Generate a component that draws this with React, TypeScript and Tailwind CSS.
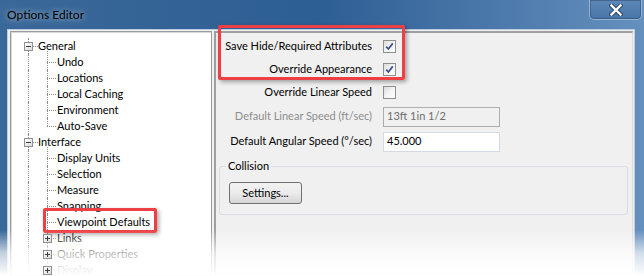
import React from 'react'

type Node = {
   label: string
   level: number
   expander?: '-' | '+'
   first?: boolean
   last?: boolean
}

const nodes: Node[] = [
   { label: 'General', level: 0, expander: '-' },
   { label: 'Undo', level: 1, first: true },
   { label: 'Locations', level: 1 },
   { label: 'Local Caching', level: 1 },
   { label: 'Environment', level: 1 },
   { label: 'Auto-Save', level: 1, last: true },
   { label: 'Interface', level: 0, expander: '-' },
   { label: 'Display Units', level: 1, first: true },
   { label: 'Selection', level: 1 },
   { label: 'Measure', level: 1 },
   { label: 'Snapping', level: 1 },
   { label: 'Viewpoint Defaults', level: 1 },
   { label: 'Links', level: 1, expander: '+' },
   { label: 'Quick Properties', level: 1, expander: '+' },
   { label: 'Display', level: 1, expander: '+' },
]

const Expander = ({ sign }: { sign: '-' | '+' }) => (
   <div className="relative z-10 w-[9px] h-[9px] border border-[#919191] bg-linear-to-br from-white to-[#dcdcdc]">
      <div className="absolute left-[1px] top-[3px] w-[5px] h-px bg-[#3c3c3c]" />
      {sign === '+' && <div className="absolute left-[3px] top-[1px] w-px h-[5px] bg-[#3c3c3c]" />}
   </div>
)

const TreeRow = ({ node }: { node: Node }) => (
   <div className="flex h-4 items-stretch">
      {/* level 0 column */}
      <div className="relative w-4 flex items-center justify-center">
         <div className="absolute left-[8px] top-0 bottom-0 border-l border-dotted border-[#8c8c8c]" />
         {node.level === 0 && (
            <>
               <div className="absolute left-[13px] top-[8px] w-[5px] border-t border-dotted border-[#8c8c8c]" />
               <Expander sign={node.expander!} />
            </>
         )}
      </div>
      {node.level === 1 && (
         <div className="relative w-[17px] ml-[3px] flex items-center justify-center">
            <div className={`absolute left-[8px] border-l border-dotted border-[#8c8c8c] ${node.first ? 'top-[-3px]' : 'top-0'} ${node.last ? 'h-[8px]' : 'bottom-0'}`} />
            <div className="absolute left-[8px] top-[8px] w-[9px] border-t border-dotted border-[#8c8c8c]" />
            {node.expander && <Expander sign={node.expander} />}
         </div>
      )}
      <div className={`flex items-center text-[11px] text-black whitespace-nowrap ${node.level === 0 ? 'ml-[2px]' : 'ml-[1px]'}`}>
         {node.label}
      </div>
   </div>
)

const Checkbox = ({ checked }: { checked: boolean }) => (
   <div className="w-[13px] h-[13px] border border-[#8e8f8f] bg-linear-to-br from-[#dcdcdc] via-[#f4f4f4] to-white flex items-center justify-center">
      {checked && (
         <svg width="9" height="9" viewBox="0 0 9 9">
            <path d="M1.2 4.6 L3.4 7 L7.8 1.4" fill="none" stroke="#3c4f8c" strokeWidth="1.7" />
         </svg>
      )}
   </div>
)

const App = () => {
   return (
      <div className="relative w-[644px] h-[276px] overflow-hidden bg-linear-to-r from-[#3a6898] via-[#2d5e94] to-[#6590be]" style={{ fontFamily: 'Lato, "Noto Sans", sans-serif' }}>
         {/* title bar */}
         <div className="relative h-[29px] flex items-center pl-[7px] pt-[1px]">
            <span className="text-[12px] text-black [text-shadow:0_0_6px_rgba(255,255,255,0.7)]">Options Editor</span>
            <div className="absolute right-[2px] top-0 w-[53px] h-[20px] rounded-b-[5px] border border-t-0 border-[#a8c2de]/80 bg-linear-to-b from-[#5f88b6] to-[#4774a7] shadow-[inset_0_0_0_1px_rgba(40,70,110,0.5)] flex items-center justify-center">
               <svg width="14" height="12" viewBox="0 0 14 12">
                  <path d="M2.5 1.5 L11.5 10.5 M11.5 1.5 L2.5 10.5" stroke="#27405e" strokeWidth="4.2" strokeLinecap="square" />
                  <path d="M2.5 1.5 L11.5 10.5 M11.5 1.5 L2.5 10.5" stroke="#ffffff" strokeWidth="2.4" strokeLinecap="square" />
               </svg>
            </div>
         </div>

         {/* client area */}
         <div className="ml-[7px] mr-[9px] h-[247px] border-l border-t border-r border-[#b8cde3] bg-[#f0f0f0] flex gap-[2px] pt-[1px] pl-[2px] pr-[1px]">
            {/* tree */}
            <div className="w-[202px] h-full border border-[#9c9c9c] bg-white pt-[6px] pl-[9px] shadow-[inset_1px_1px_0_#d8d8d8]">
               {nodes.map((n) => (
                  <TreeRow key={n.label} node={n} />
               ))}
            </div>

            {/* settings panel */}
            <div className="flex-1 h-full border-t-2 border-l-2 border-t-[#a0a0a0] border-l-[#a0a0a0] border-r border-r-[#dcdcdc] bg-[#f0f0f0] pt-[2px] pl-[2px] text-[11px] text-black">
               <div className="grid grid-cols-[154px_auto] gap-x-[11px] items-center">
                  <div className="h-[23px] flex items-center justify-end whitespace-nowrap">Save Hide/Required Attributes</div>
                  <Checkbox checked />
                  <div className="h-[23px] flex items-center justify-end whitespace-nowrap">Override Appearance</div>
                  <Checkbox checked />
                  <div className="h-[23px] flex items-center justify-end whitespace-nowrap">Override Linear Speed</div>
                  <Checkbox checked={false} />
                  <div className="h-[25px] flex items-center justify-end whitespace-nowrap text-[#8d8d8d]">Default Linear Speed (ft/sec)</div>
                  <div className="w-[117px] h-[20px] border border-[#adadad] bg-[#f0f0f0] text-[#6d6d6d] pl-[3px] flex items-center">13ft 1in 1/2</div>
                  <div className="h-[25px] flex items-center justify-end whitespace-nowrap">Default Angular Speed (°/sec)</div>
                  <div className="w-[117px] h-[20px] border border-[#d3dae6] bg-white pl-[3px] flex items-center">45.000</div>
               </div>

               {/* collision group */}
               <div className="relative mt-[12px] ml-[1px] w-[409px] h-[49px] border border-[#d5dfe5] rounded-[3px] pt-[15px] pl-[9px]">
                  <span className="absolute left-[6px] top-[-10px] px-[2px] bg-[#f0f0f0] leading-[18px]">Collision</span>
                  <button className="w-[73px] h-[22px] border border-[#707070] rounded-[3px] bg-linear-to-b from-[#f2f2f2] via-[#ebebeb] to-[#d6d6d6] text-[11px] text-black flex items-center justify-center">
                     Settings...
                  </button>
               </div>
            </div>
         </div>

         {/* annotation boxes */}
         <div className="absolute left-[218px] top-[25px] w-[187px] h-[55px] border-[3px] border-[#ee3f44] rounded-[2px] shadow-[2px_2px_4px_rgba(0,0,0,0.35)]" />
         <div className="absolute left-[43px] top-[208px] w-[114px] h-[25px] border-[3px] border-[#ee3f44] rounded-[2px] shadow-[2px_2px_4px_rgba(0,0,0,0.35)]" />

         {/* bottom fade */}
         <div className="absolute left-0 right-0 bottom-0 h-[46px] bg-linear-to-b from-white/0 via-white/70 to-white" />
      </div>
   )
}

export default App
